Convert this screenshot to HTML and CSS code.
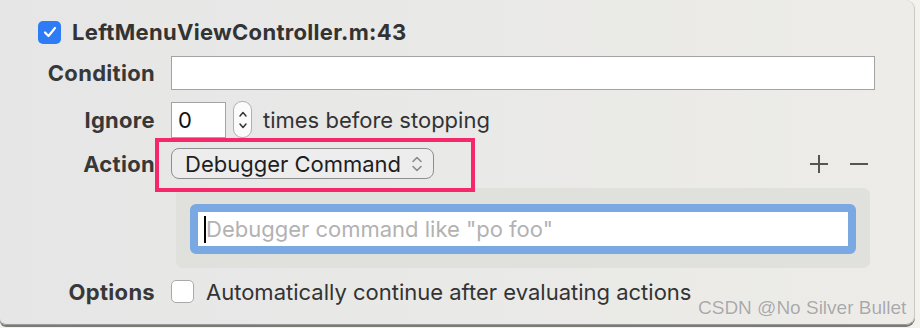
FILE: index.html
```html
<!DOCTYPE html>
<html lang="en">
<head>
  <meta charset="UTF-8">
  <title>Breakpoint</title>
  <link rel="stylesheet" href="styles.css">
</head>
<body>

  <div class="panel">
    <div class="title-row">
      <span class="check on">
        <svg width="14" height="12" viewBox="0 0 14 12"><path d="M2 6.5 L5.5 10 L12 2" fill="none" stroke="#fff" stroke-width="2.2" stroke-linecap="round" stroke-linejoin="round"/></svg>
      </span>
      <span class="title">LeftMenuViewController.m:43</span>
    </div>

    <div class="row row-condition">
      <label class="label">Condition</label>
      <input class="field field-wide" type="text">
    </div>

    <div class="row row-ignore">
      <label class="label">Ignore</label>
      <input class="field field-small" type="text" value="0">
      <span class="stepper">
        <svg width="10" height="26" viewBox="0 0 10 26"><path d="M2 9 L5 5.5 L8 9 M2 17 L5 20.5 L8 17" fill="none" stroke="#333" stroke-width="1.5" stroke-linecap="round" stroke-linejoin="round"/></svg>
      </span>
      <span class="text">times before stopping</span>
    </div>

    <div class="row row-action">
      <label class="label">Action</label>
      <div class="popup-wrap">
        <div class="popup">
          <span>Debugger Command</span>
          <svg width="12" height="20" viewBox="0 0 12 20"><path d="M2 7.5 L6 3.5 L10 7.5 M2 12.5 L6 16.5 L10 12.5" fill="none" stroke="#8a8a8a" stroke-width="1.6" stroke-linecap="round" stroke-linejoin="round"/></svg>
        </div>
        <div class="highlight"></div>
      </div>
      <div class="spacer"></div>
      <span class="icon-btn">
        <svg width="18" height="18" viewBox="0 0 18 18"><path d="M9 0 V18 M0 9 H18" stroke="#555" stroke-width="2"/></svg>
      </span>
      <span class="icon-btn">
        <svg width="18" height="18" viewBox="0 0 18 18"><path d="M0 9 H18" stroke="#555" stroke-width="2"/></svg>
      </span>
    </div>

    <div class="action-box">
      <div class="focus-ring">
        <span class="caret"></span>
        <span class="placeholder">Debugger command like "po foo"</span>
      </div>
    </div>

    <div class="row row-options">
      <label class="label">Options</label>
      <span class="check off"></span>
      <span class="text">Automatically continue after evaluating actions</span>
    </div>

    <div class="watermark">CSDN @No Silver Bullet</div>
  </div>

</body>
</html>
```

FILE: styles.css
```css
body {
  margin: 0;
  height: 328px;
  overflow: hidden;
  background: #f3f2ed;
  font-family: Inter, "Noto Sans", sans-serif;
  color: #333;
}
.panel {
  position: relative;
  width: 915px;
  height: 325px;
  box-sizing: border-box;
  padding-top: 20px;
  background: linear-gradient(to right, #e6e6e6, #e9e9e8 50%, #edece7);
  border-right: 1px solid #c9c9c6;
  border-bottom: 1px solid #9a9a9a;
  border-radius: 0 9px 9px 6px;
  box-shadow: 0 2px 0 #7a7a7a;
}
.title-row {
  display: flex;
  align-items: center;
  height: 24px;
  margin-left: 38px;
  gap: 11px;
}
.title {
  font-size: 22px;
  font-weight: 700;
  letter-spacing: 0.3px;
  color: #333;
}
.check {
  width: 23px;
  height: 23px;
  box-sizing: border-box;
  border-radius: 5px;
  display: inline-flex;
  align-items: center;
  justify-content: center;
  flex-shrink: 0;
}
.check.on {
  background: #2e7cf5;
}
.check.off {
  background: #fff;
  border: 1px solid #a9a9a9;
}
.row {
  display: flex;
  align-items: center;
}
.label {
  width: 155px;
  flex-shrink: 0;
  text-align: right;
  font-size: 22px;
  font-weight: 700;
  letter-spacing: 0.3px;
  color: #383838;
  margin-right: 16px;
}
.text {
  font-size: 22px;
  color: #333;
}
.field {
  height: 100%;
  box-sizing: border-box;
  border: 1px solid #a3a3a3;
  background: #fff;
  font-family: inherit;
  font-size: 22px;
  color: #111;
  outline: none;
  margin: 0;
}
.row-condition {
  margin-top: 12px;
  height: 34px;
}
.field-wide {
  width: 704px;
}
.row-ignore {
  margin-top: 11px;
  height: 37px;
}
.field-small {
  width: 55px;
  height: 36px;
  padding: 0 6px;
}
.stepper {
  width: 19px;
  height: 37px;
  margin-left: 7px;
  margin-right: 11px;
  box-sizing: border-box;
  border: 1px solid #b0b0b0;
  border-radius: 9px;
  background: #fbfbfb;
  display: flex;
  align-items: center;
  justify-content: center;
}
.row-action {
  margin-top: 10px;
  height: 31px;
  padding-right: 46px;
}
.popup-wrap {
  position: relative;
}
.popup {
  width: 263px;
  height: 31px;
  box-sizing: border-box;
  border: 1px solid #8e8e8e;
  border-radius: 8px;
  background: #ededed;
  display: flex;
  align-items: center;
  justify-content: space-between;
  padding: 0 10px 0 13px;
  font-size: 22px;
  color: #1e1e1e;
}
.highlight {
  position: absolute;
  left: -16px;
  top: -10px;
  width: 320px;
  height: 54px;
  box-sizing: border-box;
  border: 4px solid #f5286c;
}
.spacer {
  flex: 1;
}
.icon-btn {
  display: flex;
  margin-left: 22px;
}
.action-box {
  margin: 9px 0 0 176px;
  width: 694px;
  height: 80px;
  box-sizing: border-box;
  padding: 16px 14px 14px;
  background: #e0e0dd;
  border-radius: 7px;
}
.focus-ring {
  height: 50px;
  box-sizing: border-box;
  border: 8px solid #7aa8e2;
  border-radius: 6px;
  background: #fff;
  display: flex;
  align-items: center;
  padding-left: 6px;
}
.caret {
  width: 2px;
  height: 27px;
  background: #000;
}
.placeholder {
  font-size: 22px;
  color: #b2b2b2;
}
.row-options {
  margin-top: 12px;
  height: 23px;
}
.row-options .check {
  margin-right: 12px;
}
.watermark {
  position: absolute;
  left: 698px;
  top: 297px;
  font-family: "Liberation Sans", sans-serif;
  font-size: 19px;
  color: #a9a9a9;
  text-shadow: 0 0 1px #fff;
}
```
